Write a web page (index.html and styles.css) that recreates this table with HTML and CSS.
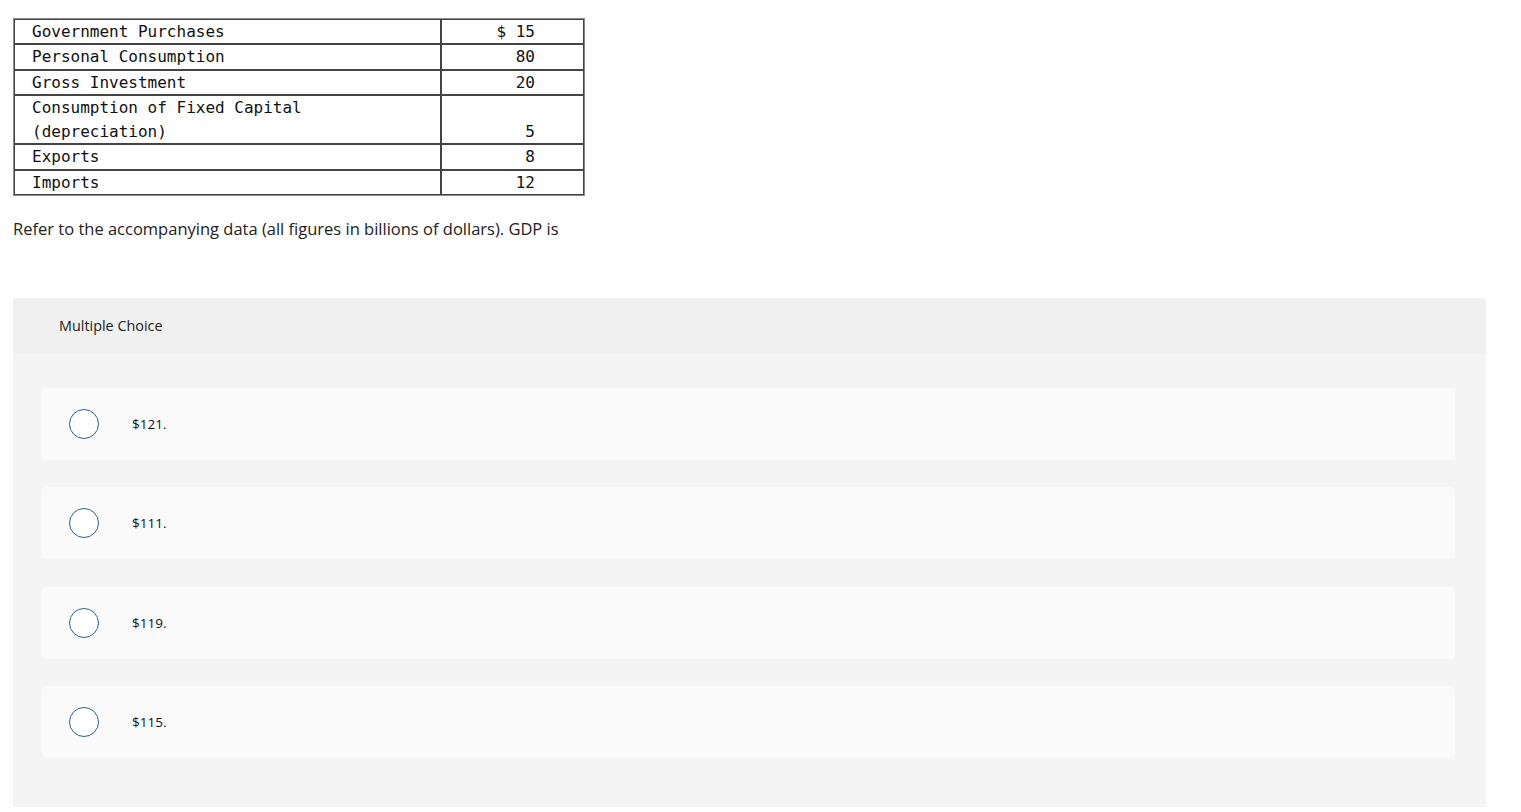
FILE: index.html
```html
<!DOCTYPE html>
<html lang="en">
<head>
<meta charset="utf-8">
<title>Question</title>
<link rel="stylesheet" href="styles.css">
</head>
<body>
<div class="page">
  <table class="data">
    <tr><td class="label">Government Purchases</td><td class="num">$ 15</td></tr>
    <tr><td class="label">Personal Consumption</td><td class="num">80</td></tr>
    <tr><td class="label">Gross Investment</td><td class="num">20</td></tr>
    <tr><td class="label">Consumption of Fixed Capital<br>(depreciation)</td><td class="num bottom">5</td></tr>
    <tr><td class="label">Exports</td><td class="num">8</td></tr>
    <tr><td class="label">Imports</td><td class="num">12</td></tr>
  </table>

  <p class="prompt">Refer to the accompanying data (all figures in billions of dollars). GDP is</p>

  <section class="mc">
    <div class="mc-head">Multiple Choice</div>
    <div class="mc-body">
      <div class="opt"><span class="radio"></span><span class="opt-text">$121.</span></div>
      <div class="opt"><span class="radio"></span><span class="opt-text">$111.</span></div>
      <div class="opt"><span class="radio"></span><span class="opt-text">$119.</span></div>
      <div class="opt"><span class="radio"></span><span class="opt-text">$115.</span></div>
    </div>
  </section>
</div>
</body>
</html>
```

FILE: styles.css
```css
html, body {
  margin: 0;
  padding: 0;
  background: #ffffff;
}

.page {
  padding: 18px 35px 0 13px;
  font-family: "Open Sans", "Roboto", sans-serif;
  color: #222;
}

.data {
  border-collapse: separate;
  border-spacing: 0;
  border: 1px solid #8a8a8a;
  width: 572px;
  font-family: "DejaVu Sans Mono", "Liberation Mono", monospace;
  font-size: 16px;
  color: #111;
}

.data td {
  border: 1px solid #444;
  padding: 0;
  line-height: 23.45px;
  vertical-align: middle;
}

.data .label {
  width: 408px;
  padding-left: 17px;
}

.data .num {
  text-align: right;
  padding-right: 48px;
}

.data .num.bottom {
  vertical-align: bottom;
}

.prompt {
  margin: 21px 0 0 0;
  font-size: 16.5px;
  line-height: 24px;
  color: #222;
}

.mc {
  margin-top: 57px;
  width: 1473px;
  border-radius: 4px 4px 0 0;
  overflow: hidden;
  background: #f4f4f4;
}

.mc-head {
  height: 55px;
  background: #f0f0f0;
  display: flex;
  align-items: center;
  padding-left: 46px;
  font-size: 14.4px;
  color: #222;
}

.mc-body {
  display: flex;
  flex-direction: column;
  gap: 27.3px;
  padding: 35px 31px 49px 29px;
}

.opt {
  height: 72px;
  background: #fafafa;
  border-radius: 4px;
  display: flex;
  align-items: center;
  padding-left: 27px;
}

.radio {
  width: 28px;
  height: 28px;
  border: 1.5px solid #2d5f8e;
  border-radius: 50%;
  background: #fff;
  flex: none;
}

.opt-text {
  margin-left: 33px;
  font-size: 13.5px;
  color: #111;
}
```
